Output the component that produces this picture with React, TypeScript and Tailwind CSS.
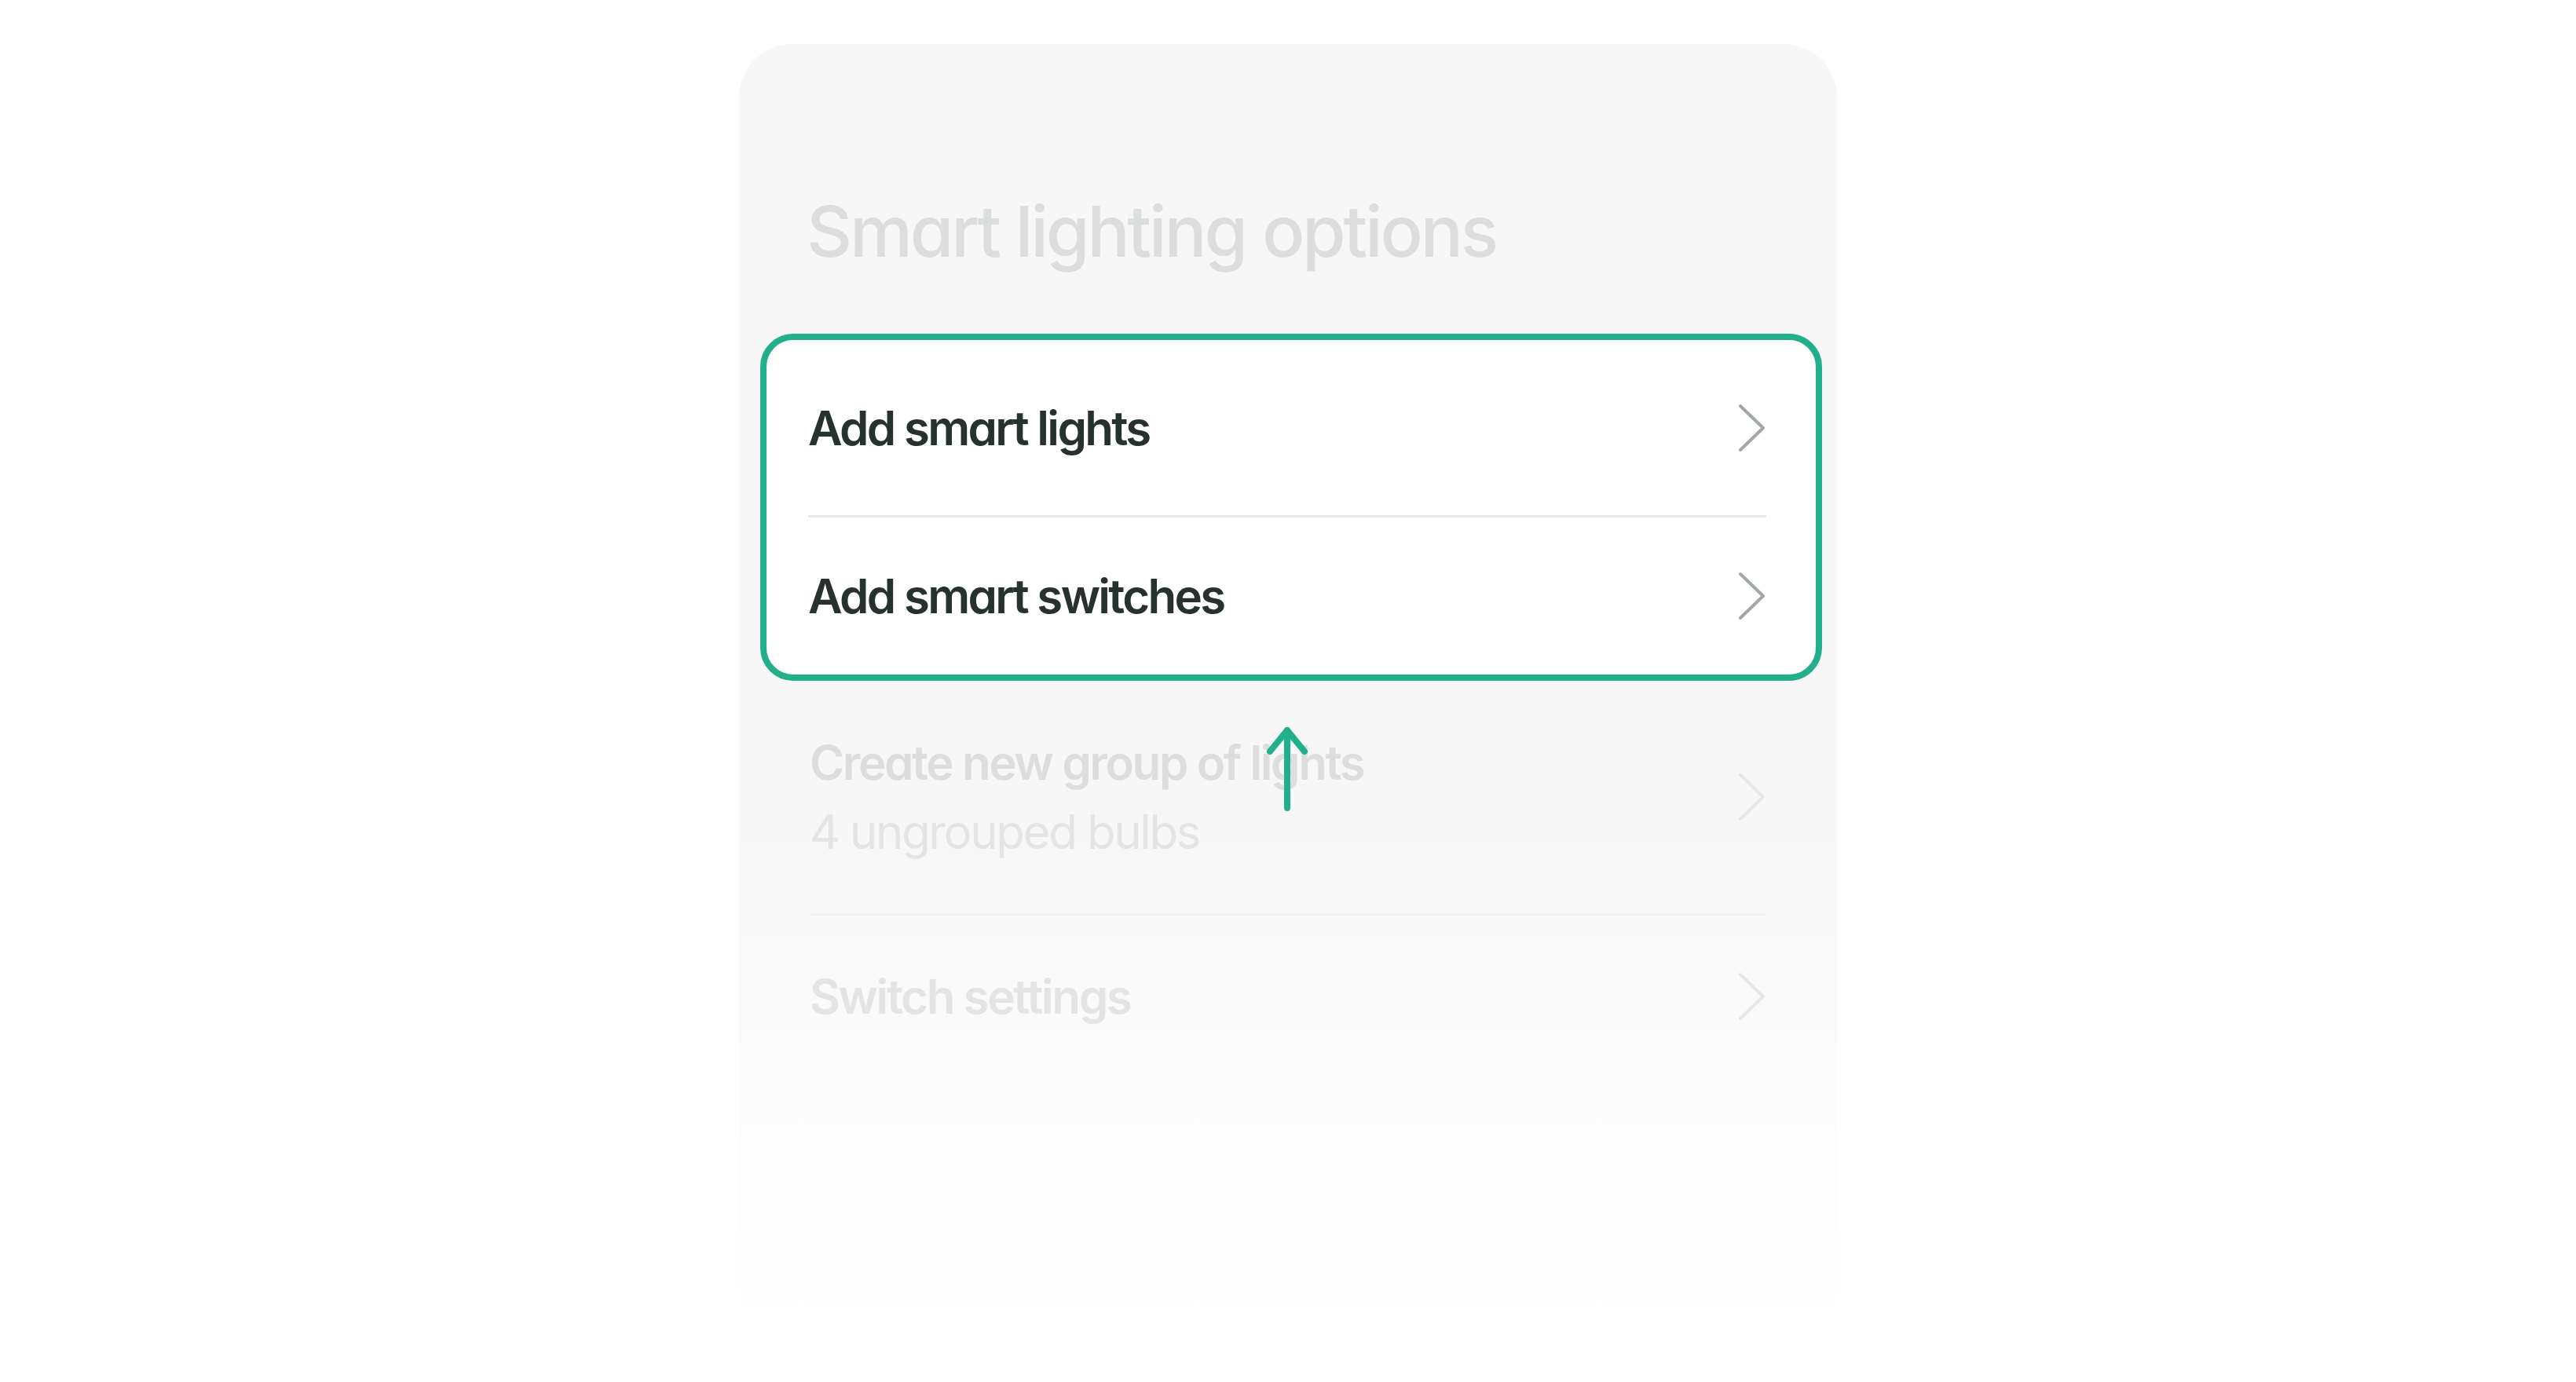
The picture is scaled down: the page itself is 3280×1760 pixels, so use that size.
const font = "font-['Inter','Liberation_Sans',sans-serif] [font-feature-settings:'cv11']";

function Chevron({ faded = false }: { faded?: boolean }) {
  return (
    <svg width="36" height="62" viewBox="0 0 36 62" fill="none" className="shrink-0">
      <path
        d="M3 3 L32 31 L3 59"
        stroke={faded ? '#e6e8e8' : '#a2a8a8'}
        strokeWidth="4"
        strokeLinecap="round"
        strokeLinejoin="round"
      />
    </svg>
  );
}

function ArrowUp() {
  return (
    <svg width="56" height="112" viewBox="0 0 56 112" fill="none">
      <path d="M28 5 L28 104" stroke="#21b08a" strokeWidth="8" strokeLinecap="round" />
      <path d="M6 32 L28 5 L50 32" stroke="#21b08a" strokeWidth="8" strokeLinecap="round" strokeLinejoin="round" />
    </svg>
  );
}

export default function App() {
  return (
    <div className={`min-h-screen bg-white ${font}`}>
      <div className="flex justify-center pt-[56px]">
        <div className="relative w-[1398px] h-[1650px] rounded-t-[68px] bg-linear-to-b from-[#f7f7f7] from-60% to-white to-[98%]">
          {/* title */}
          <div className="pt-[194px] pl-[86px] text-[90px] leading-none font-medium tracking-[-0.035em] text-[#dcdddd]">
            Smart lighting options
          </div>

          {/* highlighted group */}
          <div className="mt-[85px] ml-[27px] mr-[19px] rounded-[42px] border-8 border-[#21b08a] bg-white pl-[53px] pr-[63px]">
            <div className="h-[223px] flex items-center justify-between">
              <span className="text-[60px] leading-none font-semibold tracking-[-0.045em] text-[#263130]">Add smart lights</span>
              <Chevron />
            </div>
            <div className="h-[3px] bg-[#e4e8e9]" />
            <div className="h-[200px] flex items-center justify-between">
              <span className="text-[60px] leading-none font-semibold tracking-[-0.045em] text-[#263130]">Add smart switches</span>
              <Chevron />
            </div>
          </div>

          {/* faded rows */}
          <div className="pl-[90px] pr-[90px]">
            <div className="h-[296px] flex items-center justify-between">
              <div className="flex flex-col gap-[28px]">
                <span className="text-[60px] leading-none font-semibold tracking-[-0.04em] text-[#dcdede]">Create new group of lights</span>
                <span className="text-[60px] leading-none font-normal tracking-[-0.04em] text-[#e3e4e4]">4 ungrouped bulbs</span>
              </div>
              <Chevron faded />
            </div>
            <div className="h-[3px] bg-[#f2f3f3]" />
            <div className="h-[206px] flex items-center justify-between">
              <span className="text-[60px] leading-none font-semibold tracking-[-0.04em] text-[#e3e4e4]">Switch settings</span>
              <Chevron faded />
            </div>
          </div>

          {/* guide arrow */}
          <div className="absolute left-[670px] top-[869px]">
            <ArrowUp />
          </div>
        </div>
      </div>
    </div>
  );
}
